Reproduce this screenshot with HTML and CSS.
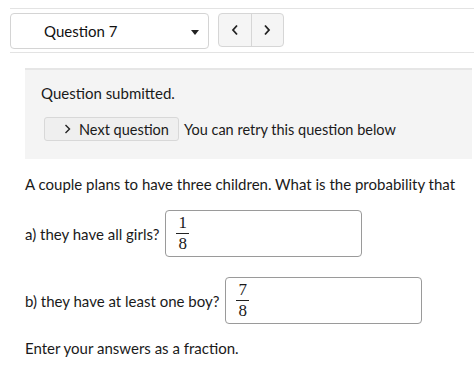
FILE: index.html
```html
<!DOCTYPE html>
<html>
<head>
<meta charset="utf-8">
<link rel="stylesheet" href="styles.css">
</head>
<body>
<div class="topbar">
  <div class="select">
    <span class="select-label">Question 7</span>
    <span class="caret"></span>
  </div>
  <div class="nav">
    <div class="nav-btn">
      <svg width="8" height="12" viewBox="0 0 8 12"><path d="M6 1.5 L2 6 L6 10.5" fill="none" stroke="#222" stroke-width="1.8"/></svg>
    </div>
    <div class="nav-btn">
      <svg width="8" height="12" viewBox="0 0 8 12"><path d="M2 1.5 L6 6 L2 10.5" fill="none" stroke="#222" stroke-width="1.8"/></svg>
    </div>
  </div>
</div>
<div class="panel">
  <div class="submitted">Question submitted.</div>
  <div class="next-row">
    <div class="next-btn">
      <svg class="chev" width="7" height="10" viewBox="0 0 7 10"><path d="M1.5 1 L5.5 5 L1.5 9" fill="none" stroke="#222" stroke-width="1.4"/></svg>
      Next question</div>
    <span class="retry">You can retry this question below</span>
  </div>
</div>
<div class="question">
  <div class="q-text">A couple plans to have three children. What is the probability that</div>
  <div class="answer-row row-a">
    <span>a) they have all girls?</span>
    <div class="answer-box">
      <div class="frac"><span class="num">1</span><span class="den">8</span></div>
    </div>
  </div>
  <div class="answer-row row-b">
    <span>b) they have at least one boy?</span>
    <div class="answer-box">
      <div class="frac"><span class="num">7</span><span class="den">8</span></div>
    </div>
  </div>
  <div class="hint">Enter your answers as a fraction.</div>
</div>
</body>
</html>
```
FILE: styles.css
```css
* { box-sizing: border-box; }
body {
  margin: 0;
  font-family: Lato, "Open Sans", sans-serif;
  font-size: 15px;
  color: #1a1a1a;
  background: #fff;
}
.topbar {
  margin: 8px 0 0 10px;
  border-top: 1px solid #e3e3e3;
  border-bottom: 1px solid #e3e3e3;
  padding: 4px 0 4px 0;
  display: flex;
  align-items: flex-start;
  gap: 9px;
  height: 45px;
}
.select {
  width: 199px;
  height: 36px;
  border: 1px solid #d4d4d4;
  border-radius: 4px;
  display: flex;
  align-items: center;
  padding-left: 33px;
  padding-right: 9px;
  background: #fff;
}
.select-label { flex: 1; font-size: 15px; color: #111; }
.caret {
  width: 0; height: 0;
  border-left: 4px solid transparent;
  border-right: 4px solid transparent;
  border-top: 5px solid #222;
  margin-top: 2px;
}
.nav {
  display: flex;
  width: 66px;
  height: 34px;
  border: 1px solid #d6d6d6;
  border-radius: 4px;
  background: #f5f5f5;
}
.nav-btn {
  flex: 1;
  display: flex;
  align-items: center;
  justify-content: center;
}
.nav-btn + .nav-btn { border-left: 1px solid #d6d6d6; }
.panel {
  margin: 15px 2px 0 25px;
  height: 91px;
  background: #f4f4f4;
  border-top: 2px solid #e6e6e6;
  padding: 13px 16px 0 16px;
}
.submitted { line-height: 20px; }
.next-row {
  display: flex;
  align-items: center;
  margin-top: 14px;
  margin-left: 3px;
  gap: 5px;
}
.next-btn {
  width: 135px;
  height: 24px;
  border: 1px solid #d8d8d8;
  border-radius: 3px;
  background: #efefef;
  display: flex;
  align-items: center;
  padding-left: 19px;
  font-size: 14.5px;
}
.chev { margin-right: 8px; }
.retry { font-size: 14.5px; }
.question { margin-left: 25px; }
.q-text { margin-top: 15px; line-height: 20px; }
.answer-row {
  display: flex;
  align-items: center;
  gap: 6px;
}
.row-a { margin-top: 16px; }
.row-b { margin-top: 20px; }
.answer-box {
  width: 197px;
  height: 47px;
  border: 1px solid #9a9a9a;
  border-radius: 4px;
  padding-left: 10px;
  display: flex;
  align-items: center;
}
.frac {
  display: inline-flex;
  flex-direction: column;
  align-items: center;
  font-family: "Liberation Serif", serif;
  font-size: 17px;
  line-height: 16px;
}
.frac .num { border-bottom: 1px solid #222; padding: 0 2px 2px; }
.frac .den { padding-top: 2px; }
.hint { margin-top: 15px; }
```
